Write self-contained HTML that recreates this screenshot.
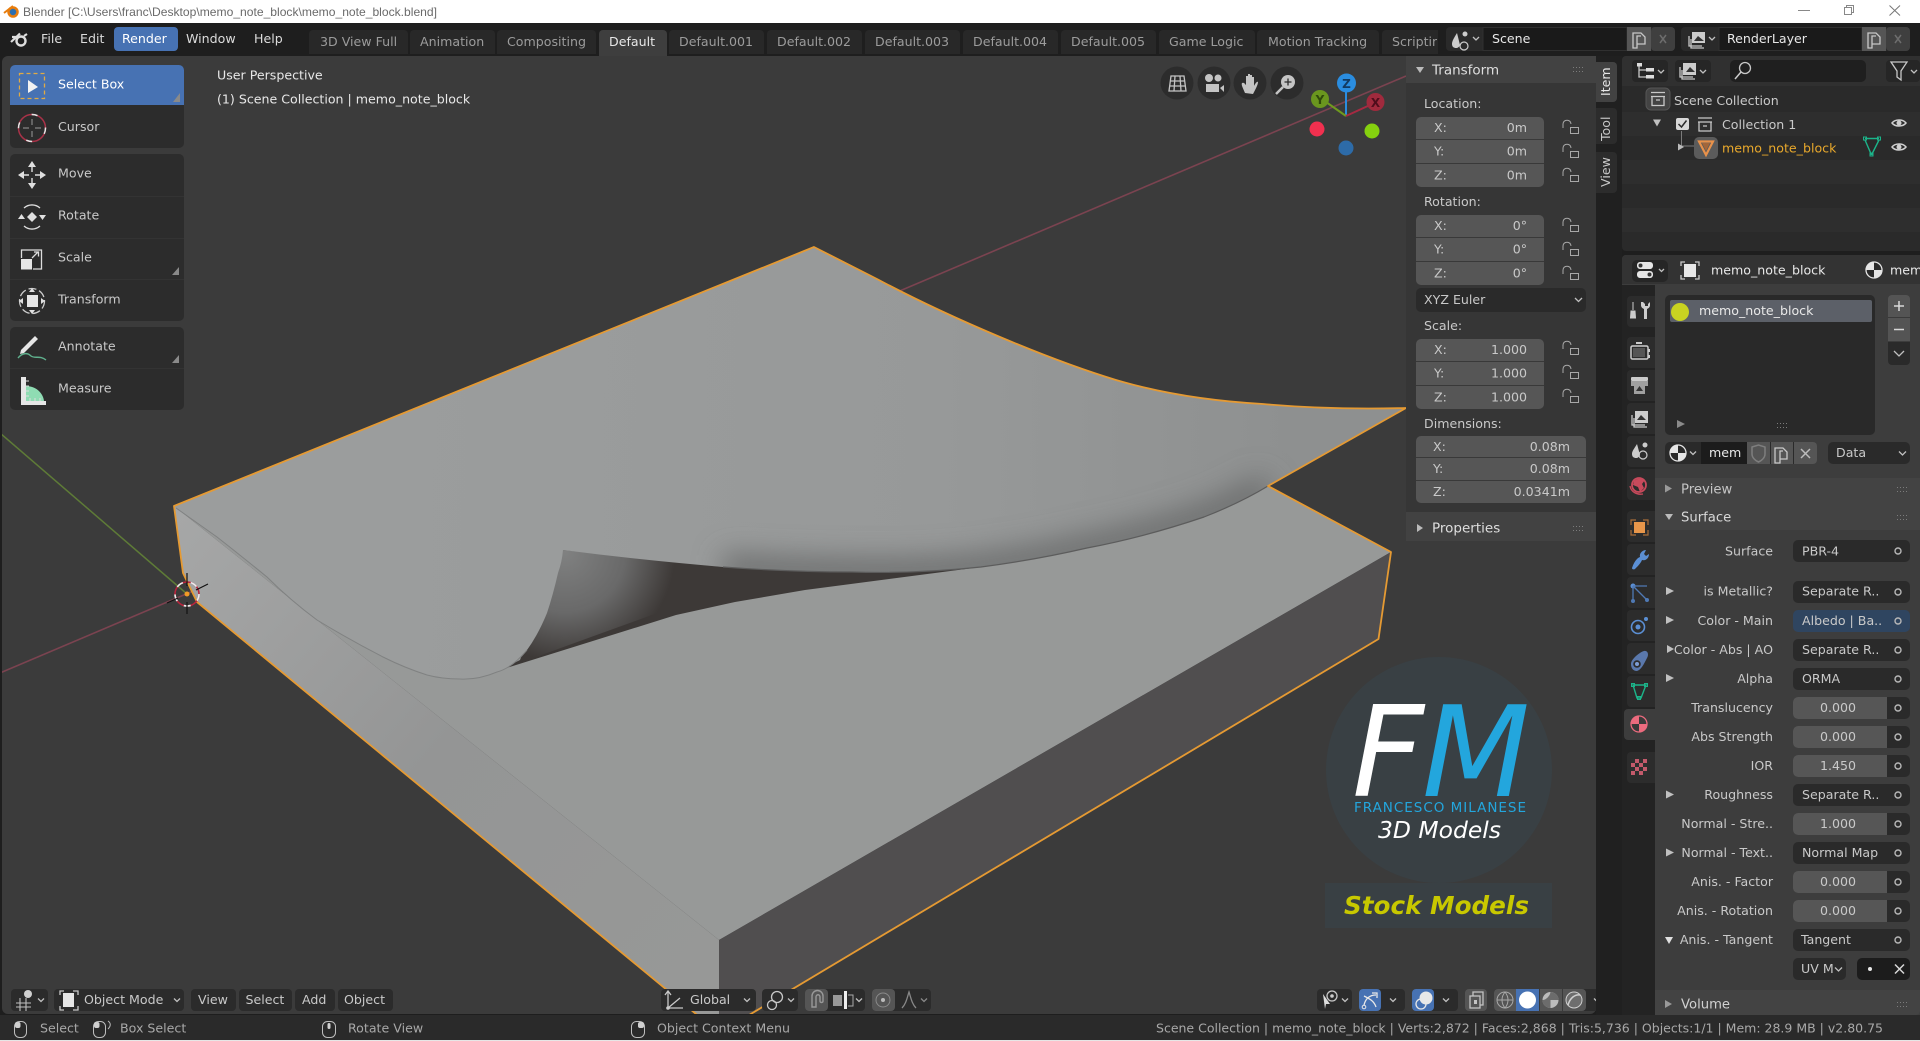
<!DOCTYPE html>
<html lang="en"><head><meta charset="utf-8"><title>Blender</title>
<style>
html,body{margin:0;padding:0;background:#1e1e1e;overflow:hidden}
svg{display:block;position:absolute;left:0;top:0}
text{font-family:"DejaVu Sans","Liberation Sans",sans-serif;font-size:12.6px;fill:#c9c9c9}
.m{fill:#dcdcdc}.tb{fill:#9c9c9c}.w{fill:#e8e8e8}.r{text-anchor:end}.c{text-anchor:middle}.l{fill:#d2d2d2}
.s{fill:none;stroke:#c8c8c8;stroke-width:1.3}
.k{fill:none;stroke:#a8a8a8;stroke-width:1}
.ch{fill:none;stroke:#c0c0c0;stroke-width:1.3}
.f{fill:#565656}.d{fill:#2a2a2a}
.g{fill:#8a8a8a}
.so{fill:none;stroke:#b8b8b8;stroke-width:1.4}
</style></head><body>
<svg width="1920" height="1041" viewBox="0 0 1920 1041" xmlns="http://www.w3.org/2000/svg">
<defs>
<linearGradient id="sheet" gradientUnits="userSpaceOnUse" x1="400" y1="420" x2="1300" y2="440"><stop offset="0" stop-color="#9b9d9d"/><stop offset=".6" stop-color="#979999"/><stop offset="1" stop-color="#8e9090"/></linearGradient>
<linearGradient id="left" gradientUnits="userSpaceOnUse" x1="174" y1="520" x2="700" y2="980"><stop offset="0" stop-color="#a6a7a7"/><stop offset=".5" stop-color="#949595"/><stop offset="1" stop-color="#979897"/></linearGradient>
<radialGradient id="curl" gradientUnits="userSpaceOnUse" cx="565" cy="552" r="110"><stop offset="0" stop-color="#808181"/><stop offset=".55" stop-color="#696969"/><stop offset="1" stop-color="#696969" stop-opacity="0"/></radialGradient>
<clipPath id="vp"><rect x="2" y="56" width="1594" height="958" rx="6"/></clipPath>
<clipPath id="sc"><path d="M174,506L814,247L877,279C950,318 1050,360 1116,380C1160,393 1210,401 1263,404Q1330,410 1406,408L1268,486Q1240,503 1204,517Q1145,537 1087,548Q1035,560 981,567Q915,574 852,572Q790,572 723,567Q640,560 563,550Q562,562 558,573Q553,595 547,613Q538,635 527,650Q512,668 497,672Q478,680 460,679Q442,679 427,675Q405,668 383,657Q350,640 317,620Q290,600 267,577Q240,555 217,537Z"/></clipPath>
<filter id="bl" x="-20%" y="-50%" width="140%" height="200%"><feGaussianBlur stdDeviation="14"/></filter>
</defs>

<!-- window title bar -->
<rect width="1920" height="1041" fill="#1e1e1e"/>
<rect width="1920" height="23" fill="#ffffff"/>
<circle cx="13" cy="12" r="4.5" fill="#2d6fb0" stroke="#e87d0d" stroke-width="2.5"/><path d="M4,13L13,6" stroke="#e87d0d" stroke-width="2"/>
<text x="23" y="16" style="font-family:'Liberation Sans',sans-serif;font-size:12px;fill:#6a6a6a" textLength="414" lengthAdjust="spacingAndGlyphs">Blender [C:\Users\franc\Desktop\memo_note_block\memo_note_block.blend]</text>
<path d="M1798,10.5H1810" stroke="#888" stroke-width="1"/>
<path d="M1844.5,7.5H1851.5V14.5H1844.5ZM1846.5,7.5V5.5H1853.5V12.5H1851.5" fill="none" stroke="#888"/>
<path d="M1889.5,5.5L1900,15.5M1900,5.5L1889.5,15.5" stroke="#777" stroke-width="1"/>

<!-- top bar -->
<circle cx="21" cy="41" r="4.5" fill="none" stroke="#ddd" stroke-width="2.4"/><path d="M11,42L20,33.5M12,37H19M24,36L27,34" stroke="#ddd" stroke-width="2.2" fill="none"/>
<text x="41" y="43" class="m">File</text>
<text x="80" y="43" class="m">Edit</text>
<rect x="114" y="27" width="64" height="24" rx="4" fill="#4772b3"/>
<text x="122" y="43" style="fill:#fff">Render</text>
<text x="186" y="43" class="m">Window</text>
<text x="254" y="43" class="m">Help</text>

<g fill="#282828">
<path d="M309,54V34a4,4 0 0 1 4,-4H404a4,4 0 0 1 4,4V54Z"/>
<path d="M410,54V34a4,4 0 0 1 4,-4H491a4,4 0 0 1 4,4V54Z"/>
<path d="M497,54V34a4,4 0 0 1 4,-4H592a4,4 0 0 1 4,4V54Z"/>
<path d="M669,54V34a4,4 0 0 1 4,-4H760a4,4 0 0 1 4,4V54Z"/>
<path d="M767,54V34a4,4 0 0 1 4,-4H858a4,4 0 0 1 4,4V54Z"/>
<path d="M865,54V34a4,4 0 0 1 4,-4H956a4,4 0 0 1 4,4V54Z"/>
<path d="M963,54V34a4,4 0 0 1 4,-4H1054a4,4 0 0 1 4,4V54Z"/>
<path d="M1061,54V34a4,4 0 0 1 4,-4H1152a4,4 0 0 1 4,4V54Z"/>
<path d="M1159,54V34a4,4 0 0 1 4,-4H1251a4,4 0 0 1 4,4V54Z"/>
<path d="M1257,54V34a4,4 0 0 1 4,-4H1375a4,4 0 0 1 4,4V54Z"/>
<path d="M1382,54V34a4,4 0 0 1 4,-4H1438V54Z"/>
</g>
<path d="M599,56V34a4,4 0 0 1 4,-4H663a4,4 0 0 1 4,4V56Z" fill="#3e3e3e"/>
<text x="320" y="46" class="tb">3D View Full</text>
<text x="420" y="46" class="tb">Animation</text>
<text x="507" y="46" class="tb">Compositing</text>
<text x="609" y="46" class="w">Default</text>
<text x="679" y="46" class="tb">Default.001</text>
<text x="777" y="46" class="tb">Default.002</text>
<text x="875" y="46" class="tb">Default.003</text>
<text x="973" y="46" class="tb">Default.004</text>
<text x="1071" y="46" class="tb">Default.005</text>
<text x="1169" y="46" class="tb">Game Logic</text>
<text x="1268" y="46" class="tb">Motion Tracking</text>
<svg x="1392" y="30" width="45" height="24"><text x="0" y="16" class="tb">Scripting</text></svg>

<!-- scene / layer -->
<rect x="1446" y="27" width="229" height="24" rx="4" class="d"/>
<rect x="1483" y="27.5" width="144" height="23" fill="#1a1a1a" stroke="#303030"/>
<rect x="1627" y="27" width="24" height="24" fill="#555"/>
<rect x="1651" y="27" width="24" height="24" rx="4" fill="#3f3f3f"/>
<text x="1492" y="43" class="w">Scene</text>
<path d="M1457,33C1454,38 1452,41 1452,44C1452,47 1454,48 1456,48C1458,48 1459,47 1460,45" fill="#ccc"/><circle cx="1464" cy="46" r="4" fill="none" stroke="#ccc" stroke-width="1.2"/><circle cx="1465" cy="34" r="2.5" fill="#ccc"/>
<path d="M1473,37L1476,40L1479,37" class="ch"/>
<path d="M1633,33H1641L1645,37V44H1637V48H1633ZM1637,44V36H1641" class="s"/>
<path d="M1660,35L1666,43M1666,35L1660,43" stroke="#6d6d6d" stroke-width="1.5"/>

<rect x="1681" y="27" width="229" height="24" rx="4" class="d"/>
<rect x="1719" y="27.5" width="143" height="23" fill="#1a1a1a" stroke="#303030"/>
<rect x="1862" y="27" width="24" height="24" fill="#555"/>
<rect x="1886" y="27" width="24" height="24" rx="4" fill="#3f3f3f"/>
<text x="1727" y="43" class="w">RenderLayer</text>
<rect x="1692" y="32" width="13" height="11" fill="#ccc"/><path d="M1689,36V46H1702M1691,39V48H1704" class="s"/><path d="M1694,41L1698,36L1704,41Z" fill="#333"/>
<path d="M1709,37L1712,40L1715,37" class="ch"/>
<path d="M1868,33H1876L1880,37V44H1872V48H1868ZM1872,44V36H1876" class="s"/>
<path d="M1895,35L1901,43M1901,35L1895,43" stroke="#6d6d6d" stroke-width="1.5"/>

<!-- viewport -->
<rect x="2" y="56" width="1594" height="958" rx="6" fill="#3b3b3b"/>
<g clip-path="url(#vp)">
<path d="M0,673L1406,76" stroke="#7b4350" stroke-width="1.6"/>
<path d="M0,433L187,594" stroke="#5e7b37" stroke-width="1.5"/>
<path d="M174,506L600,400L1268,486L1391,552L719,940Z" fill="#979998"/>
<path d="M174,506L719,940V1033L197,602L183,573Z" fill="url(#left)"/>
<path d="M719,940L1391,552L1378.5,639L719,1033Z" fill="#504e4f"/>
<path d="M563,550L981,567L805,590L735,602L676,615L500,670L480,680L520,660Z" fill="#3d3937"/>
<path d="M563,550L760,570L660,612L500,670Z" fill="url(#curl)"/>
<path d="M174,506L814,247L877,279C950,318 1050,360 1116,380C1160,393 1210,401 1263,404Q1330,410 1406,408L1268,486Q1240,503 1204,517Q1145,537 1087,548Q1035,560 981,567Q915,574 852,572Q790,572 723,567Q640,560 563,550Q562,562 558,573Q553,595 547,613Q538,635 527,650Q512,668 497,672Q478,680 460,679Q442,679 427,675Q405,668 383,657Q350,640 317,620Q290,600 267,577Q240,555 217,537Z" fill="url(#sheet)"/>
<g clip-path="url(#sc)"><path d="M1268,486Q1240,503 1204,517Q1145,537 1087,548Q1035,560 981,567Q915,574 852,572Q790,572 723,567" fill="none" stroke="#6a6c6c" stroke-width="26" filter="url(#bl)"/></g>
<path d="M1268,486Q1240,503 1204,517Q1145,537 1087,548Q1035,560 981,567Q915,574 852,572Q790,572 723,567" fill="none" stroke="#5c5c5c" stroke-width="1.2"/>
<path d="M527,650Q512,668 497,672Q478,680 460,679Q442,679 427,675Q405,668 383,657Q350,640 317,620Q290,600 267,577Q240,555 217,537L176,508" fill="none" stroke="#808282" stroke-width="1"/>
<path d="M174,506L814,247L877,279C950,318 1050,360 1116,380C1160,393 1210,401 1263,404Q1330,410 1406,408L1268,486L1391,552L1378.5,639L719,1033L197,602L183,573Z" fill="none" stroke="#e59a33" stroke-width="1.8" stroke-linejoin="round"/>
<!-- 3d cursor -->
<circle cx="187" cy="594" r="12" fill="none" stroke="#b8243c" stroke-width="1.6"/>
<circle cx="187" cy="594" r="12" fill="none" stroke="#eee" stroke-width="1.6" stroke-dasharray="7 8"/>
<path d="M187,573V586M187,602V614M167,603L178,598M196,590L208,584" stroke="#111" stroke-width="1.2"/>
<circle cx="187" cy="594" r="2.5" fill="#f09a26"/>
</g>

<!-- viewport text -->
<text x="217" y="79.500" class="w">User Perspective</text>
<text x="217" y="103.500" class="w">(1) Scene Collection | memo_note_block</text>

<!-- toolbar -->
<rect x="10" y="65" width="174" height="83" rx="5" fill="#2c2c2c"/>
<path d="M10,105V70a5,5 0 0 1 5,-5H179a5,5 0 0 1 5,5V105Z" fill="#4772b3"/>
<rect x="10" y="154" width="174" height="167" rx="5" fill="#2c2c2c"/>
<rect x="10" y="327" width="174" height="83" rx="5" fill="#2c2c2c"/>
<path d="M10,196.5H184M10,238.5H184M10,279.5H184M10,368.5H184" stroke="#333" stroke-width="1"/>
<path d="M183,96V105H176ZM182,270V278H175ZM182,358V366H175Z" fill="#8a8a8a" transform="translate(-3,-3)"/>
<text x="58" y="131">Cursor</text>
<text x="58" y="177.500">Move</text>
<text x="58" y="219.500">Rotate</text>
<text x="58" y="261.500">Scale</text>
<text x="58" y="303.500">Transform</text>
<text x="58" y="350.500">Annotate</text>
<text x="58" y="392.500">Measure</text>
<text x="58" y="88.500" style="fill:#fff">Select Box</text>
<!-- select box icon -->
<rect x="19.500" y="73.500" width="25" height="25" fill="none" stroke="#e0aa44" stroke-width="1.3" stroke-dasharray="4 3"/>
<path d="M28,80V93L38,87Z" fill="#f2f2f2"/>
<!-- cursor icon -->
<circle cx="32" cy="128" r="13.500" fill="none" stroke="#a83248" stroke-width="1.5"/>
<circle cx="32" cy="128" r="13.500" fill="none" stroke="#e6e6e6" stroke-width="1.5" stroke-dasharray="6 15"/>
<path d="M32,119V125M32,131V137M23,128H29M35,128H41" stroke="#9a9a9a" stroke-width="1"/>
<!-- move icon -->
<path d="M32,161L28,167H36ZM32,189L28,183H36ZM18,175L24,171V179ZM46,175L40,171V179Z" fill="#e0e0e0"/>
<path d="M32,167V172M32,178V183M24,175H29M35,175H40" stroke="#e0e0e0" stroke-width="1.400"/>
<!-- rotate icon -->
<path d="M24,208A12,12 0 0 1 40,208M24,226A12,12 0 0 0 40,226" fill="none" stroke="#ddd" stroke-width="1.300"/>
<path d="M32,212L37,217L32,222L27,217Z" fill="#e0e0e0"/>
<path d="M18,219H25L21.500,214ZM39,215H46L42.500,220Z" fill="#e0e0e0"/>
<!-- scale icon -->
<rect x="21" y="259" width="11" height="10.500" fill="#e6e6e6"/>
<path d="M21.500,258V250H41.500V269H33" fill="none" stroke="#ddd" stroke-width="1.300"/>
<path d="M32,258L38,252M34,252H38.500V256.500" fill="none" stroke="#ddd" stroke-width="1.300"/>
<!-- transform icon -->
<circle cx="32" cy="301" r="12.500" fill="none" stroke="#ccc" stroke-width="1.300" stroke-dasharray="8 3"/>
<rect x="27" y="295" width="11" height="12" fill="#e6e6e6"/>
<path d="M32,288L29,292H35ZM32,314L29,310H35ZM19,301L23,298V304ZM45,301L41,298V304Z" fill="#e0e0e0"/>
<!-- annotate icon -->
<path d="M21,350L35,336L38,339L24,353L20,354ZM36,335L38,337" fill="#e6e6e6"/>
<path d="M18,358C23,352 28,353 31,356C35,359 40,355 46,360" fill="none" stroke="#5fb08d" stroke-width="1.400"/>
<!-- measure icon -->
<path d="M22,377H26V401H46V405H21V377Z" fill="#e6e6e6"/>
<path d="M26,386C36,386 43,393 44,401H26Z" fill="#8fdcb3"/>
<path d="M26,381H29M26,386H29M26,391H29M26,396H29M30,401V398M35,401V398M40,401V398" stroke="#ddd" stroke-width="1"/>

<!-- gizmos: nav -->
<circle cx="1177" cy="83" r="16.500" fill="#2c2c2c"/>
<circle cx="1214" cy="83" r="16.500" fill="#2c2c2c"/>
<circle cx="1250" cy="83" r="16.500" fill="#2c2c2c"/>
<circle cx="1287" cy="83" r="16.500" fill="#2c2c2c"/>
<path d="M1171,76H1184L1186,91H1169ZM1175,76L1174,91M1180,76L1181,91M1170,81H1185M1169.500,86H1185.500" fill="none" stroke="#c4c4c4" stroke-width="1.300"/>
<circle cx="1209" cy="78" r="4" fill="#c4c4c4"/><circle cx="1218" cy="78" r="3.500" fill="#c4c4c4"/><rect x="1206" y="84" width="13" height="8" fill="#c4c4c4"/><path d="M1220,88L1224,85V92Z" fill="#c4c4c4"/>
<path d="M1245,93C1243,88 1241,85 1242,83C1244,82 1245,84 1246,85V76H1248V83V74H1250V83V75H1252V83V77H1254V86C1255,84 1257,81 1258,82C1258,85 1255,90 1253,94Z" fill="#c4c4c4"/>
<circle cx="1288" cy="82" r="7" fill="#c4c4c4"/><path d="M1283,87L1276,94" stroke="#c4c4c4" stroke-width="2.500"/><path d="M1284.500,82H1291.500M1288,78.500V85.500" stroke="#2c2c2c" stroke-width="1.300"/>

<!-- axis gizmo -->
<path d="M1346,116V92" stroke="#2a8de0" stroke-width="2"/>
<path d="M1346,116L1326,102" stroke="#6f9a1e" stroke-width="2"/>
<path d="M1346,116L1370,105" stroke="#a62a42" stroke-width="2"/>
<circle cx="1346.500" cy="83" r="9.500" fill="#2a8de0"/>
<circle cx="1320" cy="99" r="9" fill="#6a961e"/>
<circle cx="1375.500" cy="102" r="9" fill="#a02a3d"/>
<text x="1346.500" y="88" class="c" style="fill:#123b62;font-size:12px;font-weight:bold">Z</text>
<text x="1320" y="104" class="c" style="fill:#2f4a0a;font-size:12px;font-weight:bold">Y</text>
<text x="1375.500" y="107" class="c" style="fill:#4f0d1c;font-size:12px;font-weight:bold">X</text>
<circle cx="1317" cy="129" r="7.500" fill="#f1304f"/>
<circle cx="1372" cy="131" r="7.500" fill="#85d10f"/>
<circle cx="1346" cy="148" r="7.500" fill="#2d6ba8"/>

<!-- viewport header -->
<g fill="#2b2b2b">
<rect x="11" y="989" width="37" height="22" rx="4"/>
<rect x="54" y="989" width="130" height="22" rx="4"/>
<rect x="191" y="989" width="45" height="22" rx="4"/>
<rect x="239" y="989" width="53" height="22" rx="4"/>
<rect x="295" y="989" width="40" height="22" rx="4"/>
<rect x="338" y="989" width="55" height="22" rx="4"/>
<rect x="661" y="989" width="95" height="22" rx="4"/>
<rect x="762" y="989" width="36" height="22" rx="4"/>
<rect x="805" y="989" width="60" height="22" rx="4"/>
<rect x="872" y="989" width="59" height="22" rx="4"/>
<rect x="1317" y="989" width="35" height="22" rx="4"/>
<rect x="1359" y="989" width="46" height="22" rx="4"/>
<rect x="1412" y="989" width="46" height="22" rx="4"/>
<rect x="1494" y="989" width="114" height="22" rx="4"/>
</g>
<rect x="805" y="989" width="23" height="22" rx="4" fill="#555"/>
<rect x="872" y="989" width="23" height="22" rx="4" fill="#555"/>
<rect x="1359" y="989" width="22" height="22" rx="4" fill="#4772b3"/>
<rect x="1412" y="989" width="22" height="22" rx="4" fill="#4772b3"/>
<rect x="1465" y="989" width="22" height="22" rx="4" fill="#555"/>
<rect x="1494" y="989" width="92" height="22" rx="4" fill="#555"/>
<rect x="1516" y="989" width="23" height="22" fill="#4772b3"/>
<path d="M1539.500,989V1011M1562.500,989V1011" stroke="#3a3a3a"/>
<text x="84" y="1004">Object Mode</text>
<text x="198" y="1004">View</text>
<text x="245.500" y="1004">Select</text>
<text x="302" y="1004">Add</text>
<text x="344" y="1004">Object</text>
<text x="690" y="1004">Global</text>
<!-- editor type -->
<circle cx="28" cy="994" r="4" fill="#d0d0d0"/><path d="M16,1003H31M16,1007H31M20,998V1011M26,998V1011" stroke="#c0c0c0" stroke-width="1.100"/>
<path d="M38,998.500L41,1001.500L44,998.500" class="ch"/>
<!-- object mode -->
<rect x="63" y="993" width="11" height="14" fill="#e6e6e6"/><path d="M60,995V991H64M73,991H78V995M60,1006V1010H64M73,1010H78V1006" class="s"/>
<path d="M174,998.500L177,1001.500L180,998.500" class="ch"/>
<!-- global -->
<path d="M668,992V1008H683M668,1008L680,998" class="s"/><path d="M665,995L668,991L671,995" class="s"/><circle cx="668" cy="1008" r="1.800" fill="#ccc"/>
<path d="M744,998.500L747,1001.500L750,998.500" class="ch"/>
<!-- pivot -->
<circle cx="777" cy="997" r="5.500" class="s"/><circle cx="772" cy="1005" r="4.500" class="s"/>
<path d="M788,998.500L791,1001.500L794,998.500" class="ch"/>
<!-- magnet -->
<path d="M812,1007V996A5.500,5.500 0 0 1 823,996V1001C823,1003 820,1003 820,1001V997C820,994 816,994 816,997V1007Z" fill="none" stroke="#999" stroke-width="1.400"/>
<rect x="833" y="995" width="9" height="11" fill="#999"/><rect x="844" y="991" width="3" height="18" fill="#eee"/><path d="M848,995H853V1006H848" class="k"/>
<path d="M856,998.500L859,1001.500L862,998.500" class="ch"/>
<!-- proportional -->
<circle cx="883" cy="1000" r="7" fill="none" stroke="#8a8a8a"/><circle cx="883" cy="1000" r="2" fill="#bbb"/>
<path d="M902,1008C906,1004 907,998 909,992C911,998 912,1004 916,1008" fill="none" stroke="#888" stroke-width="1.300"/>
<path d="M921,998.500L924,1001.500L927,998.500" stroke="#888" stroke-width="1.300" fill="none"/>
<!-- visibility popover -->
<circle cx="1332" cy="996" r="5" class="s"/><circle cx="1332" cy="996" r="1.800" fill="#ccc"/><path d="M1323,994L1330,1004L1326,1004L1325,1009Z" fill="#ddd"/>
<path d="M1342,998.500L1345,1001.500L1348,998.500" class="ch"/>
<!-- gizmo toggle -->
<path d="M1364,1005C1366,997 1371,995 1376,995M1376,1007C1374,1001 1370,999 1364,996M1372,993L1377,993L1377,998" fill="none" stroke="#e8e8e8" stroke-width="1.300"/><circle cx="1364" cy="1007" r="1.800" fill="none" stroke="#e8e8e8"/>
<path d="M1390,998.500L1393,1001.500L1396,998.500" class="ch"/>
<!-- overlay toggle -->
<circle cx="1426" cy="998" r="6.500" fill="#e8e8e8"/><circle cx="1421" cy="1004" r="5" fill="none" stroke="#e8e8e8" stroke-width="1.300"/>
<path d="M1443,998.500L1446,1001.500L1449,998.500" class="ch"/>
<!-- xray -->
<rect x="1470" y="996" width="10" height="12" fill="none" stroke="#c4c4c4" stroke-width="1.300"/><path d="M1473,996V992H1483V1005H1480" fill="none" stroke="#c4c4c4" stroke-width="1.300"/><rect x="1474" y="1000" width="3" height="4" fill="#c4c4c4"/>
<!-- shading -->
<circle cx="1505" cy="1000" r="8" class="k"/><path d="M1497,1000H1513M1505,992C1501,997 1501,1003 1505,1008C1509,1003 1509,997 1505,992" class="k"/>
<circle cx="1527.500" cy="1000" r="8.500" fill="#fff"/>
<circle cx="1550.500" cy="1000" r="8" fill="#bcbcbc"/><path d="M1550.500,992A8,8 0 0 1 1558.500,1000H1550.500V1008A8,8 0 0 1 1542.500,1000C1546,1000 1550,996 1550.500,992Z" fill="#6c6c6c"/>
<circle cx="1574" cy="1000" r="8" fill="#6e6e6e" stroke="#cfcfcf"/><path d="M1568,1005C1570,998 1575,994 1580,995" fill="none" stroke="#cfcfcf" stroke-width="1.500"/>
<path d="M1594,998.500L1597,1001.500L1600,998.500" class="ch"/>

<!-- N panel -->
<rect x="1406" y="83" width="190" height="429" fill="#363636"/>
<path d="M1406,56H1596V83H1406Z" fill="#424242"/>
<path d="M1406,512H1596V541H1406Z" fill="#424242"/>
<path d="M1416,67H1424L1420,73Z" fill="#bbb"/>
<text x="1432" y="74.500" style="fill:#dedede;font-size:13.500px">Transform</text>
<path d="M1417,524V532L1423,528Z" fill="#bbb"/>
<text x="1432" y="532.500" style="fill:#dedede;font-size:13.500px">Properties</text>
<path d="M1573,67.500H1584M1573,71.500H1584M1573,526.500H1584M1573,530.500H1584" stroke="#7c7c7c" stroke-dasharray="1 2"/>

<text x="1424" y="108">Location:</text>
<rect x="1416" y="117" width="128" height="70" rx="5" class="f"/>
<path d="M1416,139.500H1544M1416,163.500H1544" stroke="#393939"/>
<text x="1434" y="132">X:</text><text x="1527" y="132" class="r">0m</text>
<text x="1434" y="155.500">Y:</text><text x="1527" y="155.500" class="r">0m</text>
<text x="1434" y="179.500">Z:</text><text x="1527" y="179.500" class="r">0m</text>

<text x="1424" y="206">Rotation:</text>
<rect x="1416" y="215" width="128" height="70" rx="5" class="f"/>
<path d="M1416,237.500H1544M1416,261.500H1544" stroke="#393939"/>
<text x="1434" y="230">X:</text><text x="1527" y="230" class="r">0°</text>
<text x="1434" y="253.500">Y:</text><text x="1527" y="253.500" class="r">0°</text>
<text x="1434" y="277.500">Z:</text><text x="1527" y="277.500" class="r">0°</text>

<rect x="1416" y="288" width="170" height="24" rx="5" class="d"/>
<text x="1424" y="304">XYZ Euler</text>
<path d="M1575,298L1578.500,301.500L1582,298" class="ch"/>

<text x="1424" y="330">Scale:</text>
<rect x="1416" y="339" width="128" height="70" rx="5" class="f"/>
<path d="M1416,361.500H1544M1416,385.500H1544" stroke="#393939"/>
<text x="1434" y="354">X:</text><text x="1527" y="354" class="r">1.000</text>
<text x="1434" y="377.500">Y:</text><text x="1527" y="377.500" class="r">1.000</text>
<text x="1434" y="401.500">Z:</text><text x="1527" y="401.500" class="r">1.000</text>

<text x="1424" y="428">Dimensions:</text>
<rect x="1416" y="436" width="170" height="67" rx="5" class="f"/>
<path d="M1416,457.500H1586M1416,480.500H1586" stroke="#393939"/>
<text x="1433" y="451">X:</text><text x="1570" y="451" class="r">0.08m</text>
<text x="1433" y="473">Y:</text><text x="1570" y="473" class="r">0.08m</text>
<text x="1433" y="496">Z:</text><text x="1570" y="496" class="r">0.0341m</text>

<!-- locks -->
<path d="M1563,128V124C1563,119 1571,119 1571,124" class="k"/><rect x="1570.500" y="127.500" width="8" height="6" class="k"/>
<path d="M1563,152V148C1563,143 1571,143 1571,148" class="k"/><rect x="1570.500" y="151.500" width="8" height="6" class="k"/>
<path d="M1563,176V172C1563,167 1571,167 1571,172" class="k"/><rect x="1570.500" y="175.500" width="8" height="6" class="k"/>
<path d="M1563,226V222C1563,217 1571,217 1571,222" class="k"/><rect x="1570.500" y="225.500" width="8" height="6" class="k"/>
<path d="M1563,250V246C1563,241 1571,241 1571,246" class="k"/><rect x="1570.500" y="249.500" width="8" height="6" class="k"/>
<path d="M1563,274V270C1563,265 1571,265 1571,270" class="k"/><rect x="1570.500" y="273.500" width="8" height="6" class="k"/>
<path d="M1563,349V345C1563,340 1571,340 1571,345" class="k"/><rect x="1570.500" y="348.500" width="8" height="6" class="k"/>
<path d="M1563,373V369C1563,364 1571,364 1571,369" class="k"/><rect x="1570.500" y="372.500" width="8" height="6" class="k"/>
<path d="M1563,397V393C1563,388 1571,388 1571,393" class="k"/><rect x="1570.500" y="396.500" width="8" height="6" class="k"/>

<!-- side tabs -->
<rect x="1596" y="56" width="26" height="959" fill="#202020"/>
<path d="M1596,62H1613a4,4 0 0 1 4,4V98a4,4 0 0 1 -4,4H1596Z" fill="#424242"/>
<path d="M1596,108H1613a4,4 0 0 1 4,4V140a4,4 0 0 1 -4,4H1596Z" fill="#2c2c2c"/>
<path d="M1596,152H1613a4,4 0 0 1 4,4V189a4,4 0 0 1 -4,4H1596Z" fill="#2c2c2c"/>
<text transform="translate(1610,96) rotate(-90)" class="w">Item</text>
<text transform="translate(1610,141) rotate(-90)">Tool</text>
<text transform="translate(1610,187) rotate(-90)">View</text>

<!-- outliner -->
<path d="M1622,60a4,4 0 0 1 4,-4H1920V251H1626a4,4 0 0 1 -4,-4Z" fill="#2a2a2a"/>
<path d="M1622,60a4,4 0 0 1 4,-4H1920V86H1622Z" fill="#303030"/>
<path d="M1622,112H1920V136H1622ZM1622,160H1920V184H1622ZM1622,208H1920V232H1622Z" fill="#2e2e2e"/>
<rect x="1632" y="60" width="36" height="22" rx="4" fill="#262626"/>
<rect x="1675" y="60" width="36" height="22" rx="4" fill="#262626"/>
<rect x="1730" y="60" width="136" height="22" rx="5" fill="#1f1f1f"/>
<rect x="1886" y="60" width="34" height="22" rx="4" fill="#262626"/>
<path d="M1639,64V77H1647M1639,70H1647" class="s"/><rect x="1637" y="63" width="5" height="3.500" fill="#ddd"/><rect x="1646" y="68" width="8" height="3.500" fill="#ddd"/><rect x="1646" y="75" width="8" height="3.500" fill="#ddd"/>
<path d="M1658,70L1661,73L1664,70" class="ch"/>
<rect x="1683" y="63" width="13" height="12" fill="#ccc"/><path d="M1680,67V77H1693M1682,70V79H1695" class="s"/><path d="M1686,72L1690,67L1695,72Z" fill="#333"/>
<path d="M1700,70L1703,73L1706,70" class="ch"/>
<circle cx="1745" cy="68" r="5.500" class="s"/><path d="M1741,72L1735,79" stroke="#ccc" stroke-width="1.500"/>
<path d="M1891,62H1907L1901,71V80L1897,77V71Z" class="s"/>
<path d="M1911,70L1914,73L1917,70" class="ch"/>
<!-- rows -->
<rect x="1646" y="88" width="24" height="22" rx="5" fill="#434343" stroke="#555"/>
<path d="M1651,92.500H1665M1651,96.500H1665M1652,96.500V105.500H1664V96.500M1656,100H1660" class="s"/>
<text x="1674" y="105">Scene Collection</text>
<path d="M1653,119.500H1661L1657,126.500Z" fill="#c0c0c0"/>
<rect x="1676" y="118" width="13" height="12" rx="2" fill="#d8d8d8"/>
<path d="M1678.500,124L1681.500,127L1686.500,120.500" fill="none" stroke="#2a2a2a" stroke-width="1.500"/>
<path d="M1698,118H1712M1698,122H1712M1699,122V131H1711V122M1703,126H1707" class="s"/>
<text x="1722" y="129">Collection 1</text>
<path d="M1681.500,131V146H1696" stroke="#7b7b7b" fill="none"/>
<path d="M1678,143.500V150.500L1684,147Z" fill="#bbb"/>
<rect x="1694" y="137" width="24" height="22" rx="5" fill="#5b5b5b"/>
<path d="M1699,141.500H1713L1706,155Z" fill="none" stroke="#e8914a" stroke-width="2.200"/>
<path d="M1702,143H1710L1706,151Z" fill="#a3663a"/>
<text x="1722" y="152.500" style="fill:#e8a82c">memo_note_block</text>
<path d="M1865,140L1871.500,155M1879,140L1871.500,155M1865,138.500H1879" fill="none" stroke="#1cb48a" stroke-width="1.400"/>
<rect x="1863.500" y="137" width="3" height="3" fill="none" stroke="#1cb48a"/><rect x="1877.500" y="137" width="3" height="3" fill="none" stroke="#1cb48a"/><rect x="1870" y="153" width="3" height="3" fill="none" stroke="#1cb48a"/>
<path d="M1892,123C1895,119 1903,119 1906,123C1903,127 1895,127 1892,123Z" fill="none" stroke="#d0d0d0" stroke-width="1.500"/><circle cx="1899" cy="123" r="2.500" fill="#d0d0d0"/>
<path d="M1892,147C1895,143 1903,143 1906,147C1903,151 1895,151 1892,147Z" fill="none" stroke="#d0d0d0" stroke-width="1.500"/><circle cx="1899" cy="147" r="2.500" fill="#d0d0d0"/>

<!-- properties editor -->
<path d="M1622,259a4,4 0 0 1 4,-4H1920V1015H1655V285H1622Z" fill="#3d3d3d"/>
<rect x="1622" y="285" width="33" height="730" fill="#232323"/>
<path d="M1622,259a4,4 0 0 1 4,-4H1920V284H1622Z" fill="#333"/>
<rect x="1632" y="260" width="36" height="22" rx="5" fill="#262626"/>
<rect x="1637" y="262" width="16" height="7" rx="3" fill="#e6e6e6"/><rect x="1637" y="271" width="16" height="7" rx="3" fill="#e6e6e6"/><circle cx="1640.500" cy="265.500" r="2" fill="#333"/><circle cx="1649.500" cy="274.500" r="2" fill="#333"/>
<path d="M1659,269L1661.500,271.500L1664,269" class="ch"/>
<rect x="1684" y="264" width="12" height="13" fill="#e6e6e6"/><path d="M1681,266V262H1685M1695,262H1699V266M1681,275V279H1685M1695,279H1699V275" class="s"/>
<text x="1711" y="274.500" class="w">memo_note_block</text>
<circle cx="1874" cy="270" r="8" fill="#e6e6e6"/><path d="M1874,262A8,8 0 0 1 1882,270H1874ZM1874,270V278A8,8 0 0 1 1866,270Z" fill="#2a2a2a"/><circle cx="1874" cy="270" r="8" fill="none" stroke="#e6e6e6" stroke-width="1.300"/>
<svg x="1890" y="256" width="30" height="28"><text x="0" y="18.500" class="w">memo_note_block</text></svg>

<!-- prop tabs -->
<g fill="#2c2c2c">
<path d="M1627,300a4,4 0 0 1 4,-4H1655V327H1631a4,4 0 0 1 -4,-4Z"/>
<path d="M1627,341a4,4 0 0 1 4,-4H1655V368H1631a4,4 0 0 1 -4,-4Z"/>
<path d="M1627,374a4,4 0 0 1 4,-4H1655V401H1631a4,4 0 0 1 -4,-4Z"/>
<path d="M1627,407a4,4 0 0 1 4,-4H1655V434H1631a4,4 0 0 1 -4,-4Z"/>
<path d="M1627,440a4,4 0 0 1 4,-4H1655V467H1631a4,4 0 0 1 -4,-4Z"/>
<path d="M1627,473a4,4 0 0 1 4,-4H1655V500H1631a4,4 0 0 1 -4,-4Z"/>
<path d="M1627,515a4,4 0 0 1 4,-4H1655V542H1631a4,4 0 0 1 -4,-4Z"/>
<path d="M1627,548a4,4 0 0 1 4,-4H1655V575H1631a4,4 0 0 1 -4,-4Z"/>
<path d="M1627,581a4,4 0 0 1 4,-4H1655V608H1631a4,4 0 0 1 -4,-4Z"/>
<path d="M1627,614a4,4 0 0 1 4,-4H1655V641H1631a4,4 0 0 1 -4,-4Z"/>
<path d="M1627,647a4,4 0 0 1 4,-4H1655V674H1631a4,4 0 0 1 -4,-4Z"/>
<path d="M1627,680a4,4 0 0 1 4,-4H1655V707H1631a4,4 0 0 1 -4,-4Z"/>
<path d="M1627,756a4,4 0 0 1 4,-4H1655V783H1631a4,4 0 0 1 -4,-4Z"/>
</g>
<path d="M1624,713a4,4 0 0 1 4,-4H1655V740H1628a4,4 0 0 1 -4,-4Z" fill="#3d3d3d"/>
<!-- tool -->
<path d="M1633,302V310M1631,311H1635L1635.500,318H1630.500Z" fill="#ccc" stroke="#ccc"/><path d="M1641,302V305C1641,307 1642,308 1644,309V319H1647V309C1649,308 1650,307 1650,305V302L1648,304V306H1645V304L1643,302Z" fill="#ccc"/>
<!-- render -->
<rect x="1631" y="346" width="17" height="13" rx="1.500" fill="none" stroke="#ccc" stroke-width="1.500"/><path d="M1636,343H1642M1649,349V352M1649,355V358" stroke="#ccc" stroke-width="2"/><rect x="1633" y="348" width="12" height="9" fill="#555"/>
<!-- output -->
<rect x="1631" y="377" width="17" height="4" rx="1" fill="#ccc"/><path d="M1631,381H1648V386H1645V394H1634V386H1631Z" fill="#a0a0a0"/><path d="M1636,391L1639.500,386L1643,391Z" fill="#333"/>
<!-- view layer -->
<rect x="1635" y="411" width="13" height="12" fill="#ccc"/><path d="M1632,415V425H1645M1634,418V427H1647" class="s"/><path d="M1637,420L1641,415L1646,420Z" fill="#333"/>
<!-- scene -->
<path d="M1637,444C1634,449 1632,451 1632,454C1632,457 1634,458 1636,458C1638,458 1639,457 1640,455" fill="#ccc"/><circle cx="1643" cy="455" r="4" fill="none" stroke="#ccc" stroke-width="1.200"/><circle cx="1645" cy="445" r="2.500" fill="#ccc"/>
<!-- world -->
<circle cx="1639" cy="485" r="7" fill="none" stroke="#c84a5c" stroke-width="1.800"/><path d="M1634,481C1637,478 1642,478 1645,480L1642,484L1644,488L1640,492L1638,487L1633,485Z" fill="#c84a5c"/><path d="M1630,486C1631,492 1637,495 1643,494" fill="none" stroke="#c84a5c" stroke-width="1.300"/>
<!-- object -->
<rect x="1634" y="522" width="11" height="11" fill="#e8964a"/><path d="M1631,525V520H1636M1643,520H1648V525M1631,530V535H1636M1643,535H1648V530" fill="none" stroke="#a76c38" stroke-width="1.200"/>
<!-- modifier -->
<path d="M1632,568C1634,562 1637,558 1640,557C1639,553 1643,550 1646,550L1644,554L1646,556L1649,554C1649,558 1646,561 1642,560C1641,563 1637,567 1635,569C1633,570 1632,569 1632,568Z" fill="#5b8fd4"/>
<!-- particles -->
<circle cx="1633" cy="586" r="2.500" fill="#5b8fd4"/><path d="M1633,586H1647M1633,586V602M1633,586L1647,600" stroke="#4f79b4" stroke-width="1.300"/><circle cx="1633" cy="601" r="2" fill="#4f79b4"/><circle cx="1647" cy="600" r="2" fill="#4f79b4"/>
<!-- physics -->
<circle cx="1638" cy="627" r="6.500" fill="none" stroke="#5b8fd4" stroke-width="1.600"/><circle cx="1638" cy="627" r="2.500" fill="#5b8fd4"/><circle cx="1646" cy="619" r="2" fill="#5b8fd4"/>
<!-- constraints -->
<path d="M1631,664C1631,659 1640,652 1644,651C1648,650 1649,655 1647,658C1644,664 1641,670 1637,671C1633,671 1631,668 1631,664Z" fill="#5a78ac"/><circle cx="1637" cy="664" r="3.800" fill="#2c2c2c"/><circle cx="1637" cy="664" r="2" fill="#7d9dd4"/>
<!-- data -->
<path d="M1633,685H1646L1641,698H1637Z" fill="none" stroke="#1cb48a" stroke-width="1.400"/><rect x="1631.500" y="683.500" width="3" height="3" fill="none" stroke="#1cb48a"/><rect x="1644.500" y="683.500" width="3" height="3" fill="none" stroke="#1cb48a"/><rect x="1637.500" y="696.500" width="3" height="3" fill="none" stroke="#1cb48a"/>
<!-- material -->
<circle cx="1639" cy="724" r="8" fill="#ec6b7e"/><path d="M1639,716A8,8 0 0 1 1647,724H1639ZM1639,724V732A8,8 0 0 1 1631,724Z" fill="#3a3a3a"/><circle cx="1639" cy="724" r="8" fill="none" stroke="#ec6b7e" stroke-width="1.300"/>
<!-- texture -->
<rect x="1631" y="759" width="16" height="16" fill="#c35a6b"/><path d="M1631,759h4v4h-4zM1639,759h4v4h-4zM1635,763h4v4h-4zM1643,763h4v4h-4zM1631,767h4v4h-4zM1639,767h4v4h-4zM1635,771h4v4h-4zM1643,771h4v4h-4z" fill="#2e2e2e"/>

<!-- material slots -->
<rect x="1665" y="295" width="210" height="140" rx="5" fill="#292929"/>
<rect x="1670" y="300" width="202" height="22" rx="2" fill="#5c6068"/>
<circle cx="1680" cy="312" r="9" fill="#c9d321"/>
<text x="1699" y="315" class="w">memo_note_block</text>
<path d="M1677,420V428L1685,424Z" fill="#8a8a8a"/>
<path d="M1777,423.500H1789M1777,427.500H1789" stroke="#7c7c7c" stroke-dasharray="1 2"/>
<path d="M1892,295H1906a4,4 0 0 1 4,4V341H1888V299a4,4 0 0 1 4,-4Z" fill="#545454"/>
<path d="M1888,317.500H1910" stroke="#3a3a3a"/>
<path d="M1888,342H1910V361a4,4 0 0 1 -4,4H1892a4,4 0 0 1 -4,-4Z" class="d"/>
<path d="M1894,306H1904M1899,301V311M1894,329.500H1904" stroke="#d8d8d8" stroke-width="1.500"/>
<path d="M1894,351L1899,356L1904,351" class="ch"/>

<rect x="1665" y="442" width="152" height="22" rx="5" class="d"/>
<rect x="1701" y="442" width="46" height="22" fill="#1c1c1c"/>
<rect x="1747" y="442" width="23" height="22" fill="#555"/>
<rect x="1771" y="442" width="22" height="22" fill="#555"/>
<path d="M1794,442H1813a4,4 0 0 1 4,4V460a4,4 0 0 1 -4,4H1794Z" fill="#555"/>
<circle cx="1678" cy="453" r="8" fill="#e6e6e6"/><path d="M1678,445A8,8 0 0 1 1686,453H1678ZM1678,453V461A8,8 0 0 1 1670,453Z" fill="#2a2a2a"/><circle cx="1678" cy="453" r="8" fill="none" stroke="#e6e6e6" stroke-width="1.300"/>
<path d="M1690,451.500L1693,454.500L1696,451.500" class="ch"/>
<text x="1709" y="457" class="w">mem</text>
<path d="M1752,447L1758.500,445L1765,447V454C1765,458 1761,461 1758.500,462C1756,461 1752,458 1752,454Z" fill="none" stroke="#7e7e7e" stroke-width="1.500"/>
<path d="M1775,448H1783L1787,452V459H1780V463H1775ZM1780,459V451H1783" class="s"/>
<path d="M1801,449L1810,458M1810,449L1801,458" stroke="#bbb" stroke-width="1.500"/>
<rect x="1828" y="442" width="82" height="22" rx="5" class="d"/>
<text x="1836" y="457">Data</text>
<path d="M1899,451.500L1902.500,455L1906,451.500" class="ch"/>

<!-- sections -->
<rect x="1655" y="478" width="265" height="52" fill="#434343"/>
<path d="M1665,484.500V492.500L1672,488.500Z" fill="#999"/>
<text x="1681" y="493.500" style="fill:#c4c4c4;font-size:13.200px">Preview</text>
<path d="M1665,514H1673L1669,520Z" fill="#bbb"/>
<text x="1681" y="521.500" style="fill:#d8d8d8;font-size:13.200px">Surface</text>
<path d="M1897,487.500H1908M1897,491.500H1908M1897,515.500H1908M1897,519.500H1908" stroke="#7c7c7c" stroke-dasharray="1 2"/>

<!-- rows -->
<text x="1773" y="555.500" class="r">Surface</text>
<rect x="1793" y="540" width="117" height="22" rx="5" class="d"/>
<text x="1802" y="555.500">PBR-4</text>
<circle cx="1898" cy="551" r="3" class="so"/>

<path d="M1666,587V595L1674,591Z" fill="#c0c0c0"/>
<text x="1773" y="595.500" class="r">is Metallic?</text>
<rect x="1793" y="581" width="117" height="22" rx="5" class="d"/>
<text x="1802" y="595.500">Separate R..</text>
<circle cx="1898" cy="592" r="3" class="so"/>

<path d="M1666,616V624L1674,620Z" fill="#c0c0c0"/>
<text x="1773" y="625" class="r">Color - Main</text>
<rect x="1793" y="610" width="117" height="22" rx="5" fill="#2f4560"/>
<text x="1802" y="625">Albedo | Ba..</text>
<circle cx="1898" cy="621" r="3" class="so"/>

<path d="M1667,645V653L1674,649Z" fill="#c0c0c0"/>
<text x="1773" y="654" class="r">Color - Abs | AO</text>
<rect x="1793" y="639" width="117" height="22" rx="5" class="d"/>
<text x="1802" y="654">Separate R..</text>
<circle cx="1898" cy="650" r="3" class="so"/>

<path d="M1666,674V682L1674,678Z" fill="#c0c0c0"/>
<text x="1773" y="683" class="r">Alpha</text>
<rect x="1793" y="668" width="117" height="22" rx="5" class="d"/>
<text x="1802" y="683">ORMA</text>
<circle cx="1898" cy="679" r="3" class="so"/>

<text x="1773" y="712" class="r">Translucency</text>
<rect x="1793" y="697" width="117" height="22" rx="5" class="d"/>
<path d="M1798,697H1887V719H1798a5,5 0 0 1 -5,-5V702a5,5 0 0 1 5,-5Z" class="f"/>
<text x="1838" y="712" class="c">0.000</text>
<circle cx="1898" cy="708" r="3" class="so"/>

<text x="1773" y="741" class="r">Abs Strength</text>
<rect x="1793" y="726" width="117" height="22" rx="5" class="d"/>
<path d="M1798,726H1887V748H1798a5,5 0 0 1 -5,-5V731a5,5 0 0 1 5,-5Z" class="f"/>
<text x="1838" y="741" class="c">0.000</text>
<circle cx="1898" cy="737" r="3" class="so"/>

<text x="1773" y="770" class="r">IOR</text>
<rect x="1793" y="755" width="117" height="22" rx="5" class="d"/>
<path d="M1798,755H1887V777H1798a5,5 0 0 1 -5,-5V760a5,5 0 0 1 5,-5Z" class="f"/>
<text x="1838" y="770" class="c">1.450</text>
<circle cx="1898" cy="766" r="3" class="so"/>

<path d="M1666,790.500V798.500L1674,794.500Z" fill="#c0c0c0"/>
<text x="1773" y="799" class="r">Roughness</text>
<rect x="1793" y="784" width="117" height="22" rx="5" class="d"/>
<text x="1802" y="799">Separate R..</text>
<circle cx="1898" cy="795" r="3" class="so"/>

<text x="1773" y="828" class="r">Normal - Stre..</text>
<rect x="1793" y="813" width="117" height="22" rx="5" class="d"/>
<path d="M1798,813H1887V835H1798a5,5 0 0 1 -5,-5V818a5,5 0 0 1 5,-5Z" class="f"/>
<text x="1838" y="828" class="c">1.000</text>
<circle cx="1898" cy="824" r="3" class="so"/>

<path d="M1666,848.500V856.500L1674,852.500Z" fill="#c0c0c0"/>
<text x="1773" y="857" class="r">Normal - Text..</text>
<rect x="1793" y="842" width="117" height="22" rx="5" class="d"/>
<text x="1802" y="857">Normal Map</text>
<circle cx="1898" cy="853" r="3" class="so"/>

<text x="1773" y="886" class="r">Anis. - Factor</text>
<rect x="1793" y="871" width="117" height="22" rx="5" class="d"/>
<path d="M1798,871H1887V893H1798a5,5 0 0 1 -5,-5V876a5,5 0 0 1 5,-5Z" class="f"/>
<text x="1838" y="886" class="c">0.000</text>
<circle cx="1898" cy="882" r="3" class="so"/>

<text x="1773" y="915" class="r">Anis. - Rotation</text>
<rect x="1793" y="900" width="117" height="22" rx="5" class="d"/>
<path d="M1798,900H1887V922H1798a5,5 0 0 1 -5,-5V905a5,5 0 0 1 5,-5Z" class="f"/>
<text x="1838" y="915" class="c">0.000</text>
<circle cx="1898" cy="911" r="3" class="so"/>

<path d="M1665,937H1673L1669,944Z" fill="#e0e0e0"/>
<text x="1773" y="944" class="r">Anis. - Tangent</text>
<rect x="1793" y="929" width="117" height="22" rx="5" class="d"/>
<text x="1801" y="944">Tangent</text>
<circle cx="1898" cy="940" r="3" class="so"/>

<rect x="1793" y="958" width="53" height="22" rx="5" class="d"/>
<text x="1801" y="973">UV M</text>
<path d="M1835,967.500L1838.500,971L1842,967.500" class="ch"/>
<rect x="1857" y="958" width="53" height="22" rx="5" fill="#1c1c1c"/>
<circle cx="1870" cy="969" r="2" fill="#e8e8e8"/>
<path d="M1895,964.500L1904,973.500M1904,964.500L1895,973.500" stroke="#d8d8d8" stroke-width="1.500"/>

<path d="M1655,990H1920V1011a4,4 0 0 1 -4,4H1655Z" fill="#434343"/>
<path d="M1665,1000V1008L1672,1004Z" fill="#999"/>
<text x="1681" y="1008.500" style="fill:#d0d0d0;font-size:13.200px">Volume</text>
<path d="M1897,1002.500H1908M1897,1006.500H1908" stroke="#7c7c7c" stroke-dasharray="1 2"/>

<!-- logo -->
<circle cx="1439" cy="770" r="113" fill="#394044"/>
<rect x="1325" y="883" width="227" height="45" fill="#394044"/>
<text x="1352" y="796" textLength="72" lengthAdjust="spacingAndGlyphs" style="font-size:126px;font-style:oblique;fill:#ffffff">F</text>
<text x="1422" y="796" textLength="108" lengthAdjust="spacingAndGlyphs" style="font-size:126px;font-style:oblique;fill:#23a6dd">M</text>
<text x="1354" y="812" textLength="172" style="font-size:13.500px;fill:#23a6dd">FRANCESCO MILANESE</text>
<text x="1378" y="838" textLength="123" lengthAdjust="spacingAndGlyphs" style="font-size:23px;font-style:oblique;fill:#fff">3D Models</text>
<text x="1344" y="914" textLength="185" lengthAdjust="spacingAndGlyphs" style="font-size:25px;font-style:oblique;font-weight:bold;fill:#c8c800">Stock Models</text>

<!-- status bar -->
<rect x="0" y="1015" width="1920" height="25" fill="#2a2a2a"/>
<rect x="0" y="1040" width="1920" height="1" fill="#e6e6e6"/>
<rect x="14.500" y="1021.500" width="12" height="16" rx="5" fill="none" stroke="#bdbdbd"/><rect x="15" y="1022" width="5.500" height="6" rx="2" fill="#d0d0d0"/>
<text x="40" y="1032.500" style="fill:#a8a8a8">Select</text>
<rect x="93.500" y="1021.500" width="12" height="16" rx="5" fill="none" stroke="#bdbdbd"/><rect x="94" y="1022" width="5.500" height="6" rx="2" fill="#d0d0d0"/><path d="M108,1021C111,1023 111,1026 108,1029" fill="none" stroke="#bdbdbd"/>
<text x="120" y="1032.500" style="fill:#a8a8a8">Box Select</text>
<rect x="322.500" y="1021.500" width="13" height="16" rx="5" fill="none" stroke="#bdbdbd"/><rect x="327.500" y="1023" width="3" height="6" rx="1.500" fill="#d0d0d0"/>
<text x="348" y="1032.500" style="fill:#a8a8a8">Rotate View</text>
<rect x="631.500" y="1021.500" width="13" height="16" rx="5" fill="none" stroke="#bdbdbd"/><rect x="638" y="1022" width="6" height="6" rx="2" fill="#d0d0d0"/>
<text x="657" y="1032.500" style="fill:#a8a8a8">Object Context Menu</text>
<text x="1156" y="1032.500" style="fill:#a8a8a8" textLength="727" lengthAdjust="spacingAndGlyphs">Scene Collection | memo_note_block | Verts:2,872 | Faces:2,868 | Tris:5,736 | Objects:1/1 | Mem: 28.9 MB | v2.80.75</text>
</svg>
</body></html>
